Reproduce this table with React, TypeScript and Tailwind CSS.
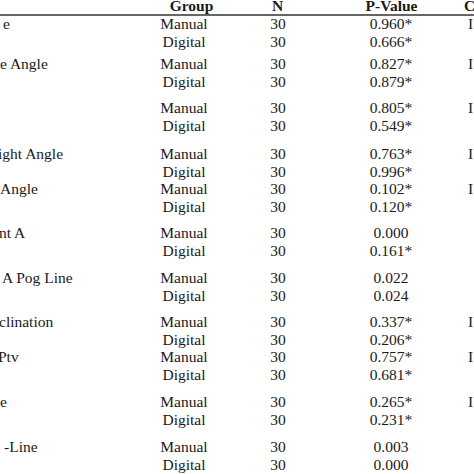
import React from 'react';

type Block = {
  name: string;
  indent: string;
  gap: string;
  manual: string;
  digital: string;
  note: boolean;
};

const blocks: Block[] = [
  { name: 'e', indent: 'ml-[3px]', gap: 'mt-[-1px]', manual: '0.960*', digital: '0.666*', note: true },
  { name: 'e Angle', indent: 'ml-0', gap: 'mt-[4px]', manual: '0.827*', digital: '0.879*', note: true },
  { name: '', indent: 'ml-0', gap: 'mt-[8px]', manual: '0.805*', digital: '0.549*', note: true },
  { name: 'ight Angle', indent: 'ml-[-2px]', gap: 'mt-[10px]', manual: '0.763*', digital: '0.996*', note: true },
  { name: 'Angle', indent: 'ml-0', gap: 'mt-[-1px]', manual: '0.102*', digital: '0.120*', note: true },
  { name: 'nt A', indent: 'ml-[-1px]', gap: 'mt-[8px]', manual: '0.000', digital: '0.161*', note: false },
  { name: 'A Pog Line', indent: 'ml-[2px]', gap: 'mt-[9px]', manual: '0.022', digital: '0.024', note: false },
  { name: 'clination', indent: 'ml-[-1px]', gap: 'mt-[8px]', manual: '0.337*', digital: '0.206*', note: true },
  { name: 'Ptv', indent: 'ml-[-2px]', gap: 'mt-[-1px]', manual: '0.757*', digital: '0.681*', note: true },
  { name: 'e', indent: 'ml-0', gap: 'mt-[9px]', manual: '0.265*', digital: '0.231*', note: true },
  { name: '-Line', indent: 'ml-[4px]', gap: 'mt-[9px]', manual: '0.003', digital: '0.000', note: false },
];

const Row = ({ name, indent, group, p, note }: { name: string; indent: string; group: string; p: string; note: boolean }) => (
  <div className="flex h-[18px] leading-[18px] whitespace-nowrap">
    <div className="w-[150px] overflow-hidden">
      <span className={`block ${indent}`}>{name}</span>
    </div>
    <div className="w-[68px] text-center">{group}</div>
    <div className="w-[120px] text-center">30</div>
    <div className="w-[106px] text-center">{p}</div>
    <div className="w-[30px] pl-[24px] overflow-hidden">{note ? 'I' : ''}</div>
  </div>
);

const App = () => {
  return (
    <div className="w-[474px] h-[474px] overflow-hidden bg-white text-[#1a1a1a] text-[15.5px] font-['Liberation_Serif','Times_New_Roman',serif]">
      {/* header row, top of it is cropped in the source */}
      <div className="flex h-[14px] font-bold leading-[12px] whitespace-nowrap border-b-2 border-[#666] box-content">
        <div className="w-[150px]" />
        <div className="w-[83px] text-center">Group</div>
        <div className="w-[89px] text-center">N</div>
        <div className="w-[139px] text-center">P-Value</div>
        <div className="w-[13px] pl-[3px] overflow-hidden">C</div>
      </div>
      {blocks.map((b, i) => (
        <div key={i} className={b.gap}>
          <Row name={b.name} indent={b.indent} group="Manual" p={b.manual} note={b.note} />
          <Row name="" indent="ml-0" group="Digital" p={b.digital} note={false} />
        </div>
      ))}
    </div>
  );
};

export default App;
